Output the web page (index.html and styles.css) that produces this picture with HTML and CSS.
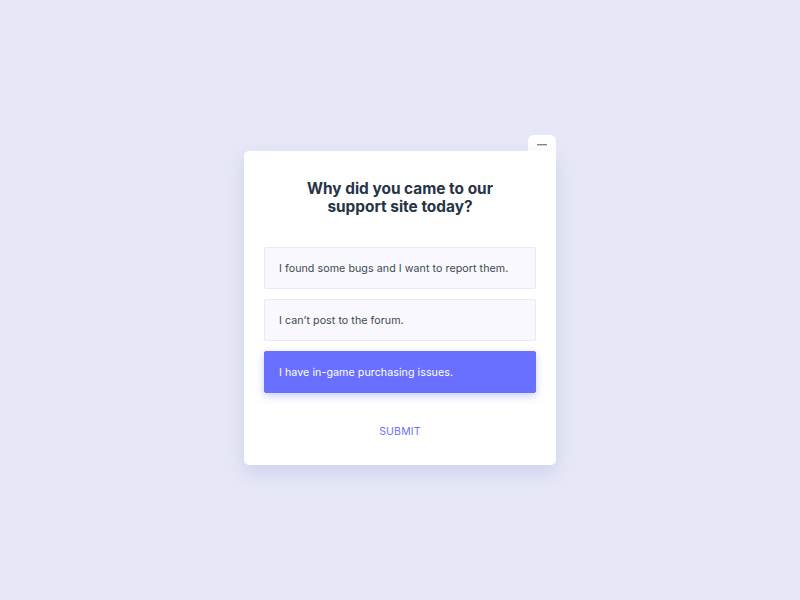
FILE: index.html
```html
<!DOCTYPE html>
<html>
<head>
<meta charset="utf-8">
<link rel="stylesheet" href="styles.css">
</head>
<body>
<div class="stage">
  <div class="widget">
    <div class="tab">
      <svg width="10" height="2" viewBox="0 0 10 2"><rect x="0" y="0" width="10" height="1.4" fill="#7d858c"/></svg>
    </div>
    <div class="card">
      <h1 class="title">Why did you came to our<br>support site today?</h1>
      <div class="options">
        <div class="option">I found some bugs and I want to report them.</div>
        <div class="option">I can’t post to the forum.</div>
        <div class="option selected">I have in-game purchasing issues.</div>
      </div>
      <div class="submit">SUBMIT</div>
    </div>
  </div>
</div>
</body>
</html>
```
FILE: styles.css
```css
html, body {
  margin: 0;
  padding: 0;
}
body {
  background: #e6e8f7;
  font-family: "Inter", "Open Sans", sans-serif;
}
.stage {
  height: 600px;
  display: flex;
  align-items: center;
  justify-content: center;
}
.widget {
  width: 312px;
  display: flex;
  flex-direction: column;
  align-items: flex-end;
}
.tab {
  width: 28px;
  height: 16px;
  background: #fff;
  border-radius: 6px 6px 0 0;
  display: flex;
  justify-content: center;
  align-items: flex-start;
  padding-top: 9px;
  box-sizing: border-box;
}
.tab svg { display: block; }
.card {
  width: 312px;
  box-sizing: border-box;
  background: #fff;
  border-radius: 5px 0 5px 5px;
  padding: 29px 20px 25px;
  box-shadow: 0 8px 18px rgba(160, 165, 220, 0.35);
}
.title {
  margin: 0;
  text-align: center;
  font-size: 15.4px;
  line-height: 18px;
  font-weight: 700;
  color: #263445;
}
.options {
  margin-top: 31px;
  display: flex;
  flex-direction: column;
  gap: 10px;
}
.option {
  height: 42px;
  box-sizing: border-box;
  border: 1px solid #e8e8f6;
  background: #f8f8fe;
  border-radius: 2px;
  padding: 0 14px;
  display: flex;
  align-items: center;
  font-size: 10.7px;
  letter-spacing: 0.05px;
  color: #3e4a52;
}
.option.selected {
  background: #6970ff;
  border-color: #6970ff;
  color: #fff;
  box-shadow: 0 3px 8px rgba(105, 112, 255, 0.35);
}
.submit {
  margin-top: 31px;
  text-align: center;
  font-size: 10.5px;
  line-height: 16px;
  color: #6970ff;
  letter-spacing: 0.2px;
}
```
